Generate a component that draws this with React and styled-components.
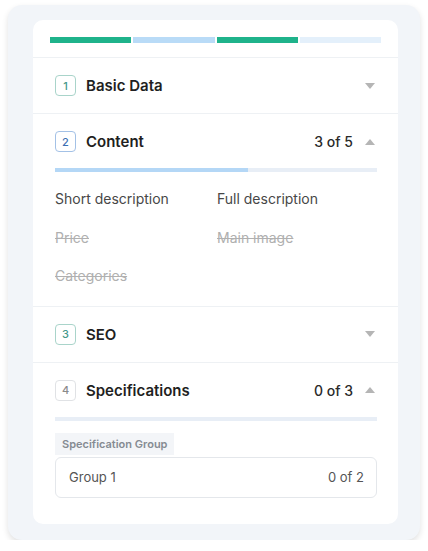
import React from 'react'
import styled, { createGlobalStyle } from 'styled-components'

const Global = createGlobalStyle`
    body {
        margin: 0;
        background: #ffffff;
        font-family: Inter, "Noto Sans", "Liberation Sans", sans-serif;
        color: #222;
    }
`

const Outer = styled.div`
    margin: 5px 8px 0 8px;
    width: 412px;
    height: 535px;
    box-sizing: border-box;
    padding: 15px 22px 16px 25px;
    background: #f2f5f9;
    border-radius: 14px;
    box-shadow: 0 3px 6px rgba(0, 0, 0, 0.12);
`

const Card = styled.div`
    background: #fff;
    border-radius: 10px;
    height: 100%;
    box-sizing: border-box;
`

const Steps = styled.div`
    display: flex;
    gap: 2px;
    padding: 17px 17px 14px 17px;
`

const Step = styled.div`
    flex: 1;
    height: 6px;
    background: ${p => p.$color};
`

const Section = styled.div`
    border-top: 1px solid #eef1f4;
`

const Header = styled.div`
    display: flex;
    align-items: center;
    height: 55px;
    padding: 0 23px 0 22px;
`

const Badge = styled.span`
    width: 19px;
    height: 19px;
    border: 1px solid ${p => p.$border};
    color: ${p => p.$color};
    border-radius: 4px;
    display: flex;
    align-items: center;
    justify-content: center;
    font-size: 11px;
    font-weight: 500;
    margin-right: 10px;
`

const Title = styled.span`
    font-size: 15px;
    font-weight: 600;
    color: #1f1f22;
    flex: 1;
`

const Count = styled.span`
    font-size: 14px;
    font-weight: 500;
    color: #2a2a2a;
    margin-right: 12px;
`

const Caret = styled.span`
    width: 0;
    height: 0;
    border-left: 5px solid transparent;
    border-right: 5px solid transparent;
    ${p => p.$up
        ? 'border-bottom: 6px solid #b5b5b5;'
        : 'border-top: 6px solid #b5b5b5;'}
`

const Body = styled.div`
    padding: 0 21px 12px 22px;
`

const Bar = styled.div`
    height: 4px;
    background: #e8eef6;
    margin-top: -1px;
`

const Fill = styled.div`
    height: 100%;
    background: #b4d7f6;
`

const Items = styled.div`
    display: grid;
    grid-template-columns: 162px 1fr;
    padding: 8px 0 0 0;
    margin-bottom: -2px;
`

const Item = styled.div`
    height: 38.5px;
    line-height: 38.5px;
    font-size: 14px;
    color: ${p => (p.$done ? '#b0b0b0' : '#474747')};
    text-decoration: ${p => (p.$done ? 'line-through' : 'none')};
`

const GroupLabel = styled.div`
    display: inline-block;
    margin-top: 12px;
    padding: 0 7px;
    height: 22px;
    line-height: 22px;
    background: #f3f5f8;
    font-size: 11px;
    font-weight: 600;
    color: #858b92;
`

const GroupBox = styled.div`
    margin-top: 2px;
    height: 41px;
    box-sizing: border-box;
    border: 1px solid #e4e7eb;
    border-radius: 6px;
    display: flex;
    align-items: center;
    justify-content: space-between;
    padding: 0 12px 0 13px;
    font-size: 13px;
    color: #555;
`

const teal = { border: '#a9d4ca', color: '#45988a' }
const blue = { border: '#a3c1e6', color: '#3b6fb3' }
const gray = { border: '#e0e2e5', color: '#8a8a8a' }

const content = [
    { label: 'Short description', done: false },
    { label: 'Full description', done: false },
    { label: 'Price', done: true },
    { label: 'Main image', done: true },
    { label: 'Categories', done: true },
]

function SectionHead({ n, tone, title, count, open }) {
    return (
        <Header>
            <Badge $border={tone.border} $color={tone.color}>{n}</Badge>
            <Title>{title}</Title>
            {count && <Count>{count}</Count>}
            <Caret $up={open} />
        </Header>
    )
}

export default function App() {
    return (
        <>
            <Global />
            <Outer>
                <Card>
                    <Steps>
                        <Step $color="#1fb38b" />
                        <Step $color="#b9dbf7" />
                        <Step $color="#1fb38b" />
                        <Step $color="#e4f0fb" />
                    </Steps>
                    <Section>
                        <SectionHead n="1" tone={teal} title="Basic Data" />
                    </Section>
                    <Section>
                        <SectionHead n="2" tone={blue} title="Content" count="3 of 5" open />
                        <Body>
                            <Bar><Fill style={{ width: '60%' }} /></Bar>
                            <Items>
                                {content.map(i => (
                                    <Item key={i.label} $done={i.done}>{i.label}</Item>
                                ))}
                            </Items>
                        </Body>
                    </Section>
                    <Section>
                        <SectionHead n="3" tone={teal} title="SEO" />
                    </Section>
                    <Section>
                        <SectionHead n="4" tone={gray} title="Specifications" count="0 of 3" open />
                        <Body>
                            <Bar />
                            <GroupLabel>Specification Group</GroupLabel>
                            <GroupBox>
                                <span>Group 1</span>
                                <span>0 of 2</span>
                            </GroupBox>
                        </Body>
                    </Section>
                </Card>
            </Outer>
        </>
    )
}
